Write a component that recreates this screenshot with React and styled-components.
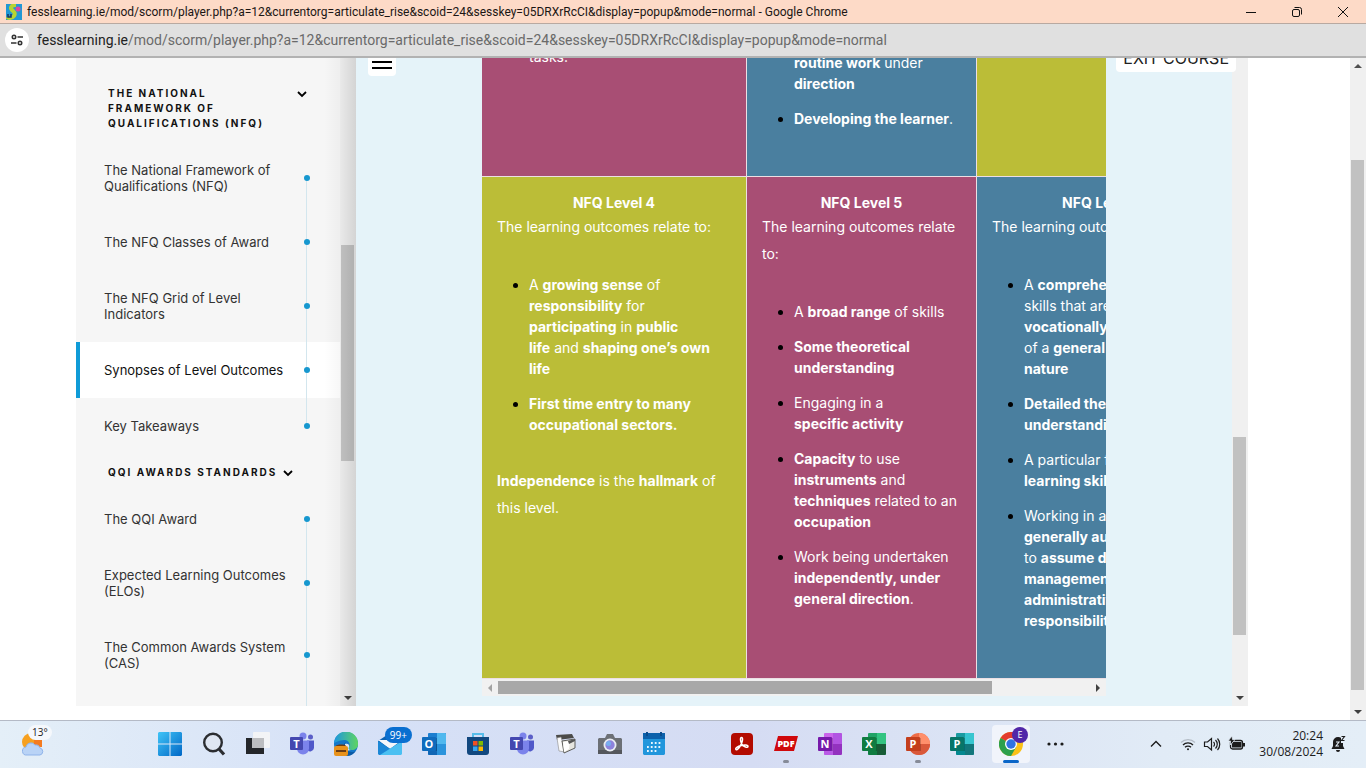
import React from "react";
import styled, { createGlobalStyle } from "styled-components";

const chapters = [
  {
    title: "The National Framework of Qualifications (NFQ)",
    lessons: [
      { name: "The National Framework of Qualifications (NFQ)" },
      { name: "The NFQ Classes of Award" },
      { name: "The NFQ Grid of Level Indicators" },
      { name: "Synopses of Level Outcomes", active: true },
      { name: "Key Takeaways" },
    ],
  },
  {
    title: "QQI Awards Standards",
    more: true,
    lessons: [
      { name: "The QQI Award" },
      { name: "Expected Learning Outcomes (ELOs)" },
      { name: "The Common Awards System (CAS)" },
    ],
  },
];

const Scroll = ({ before, size, after, horizontal, noStart, thumb, track }) => (
  <ScrollTrack $horizontal={horizontal} $track={track} aria-hidden="true">
    <ScrollArrow>
      {!noStart && (
        <svg width="10" height="10" viewBox="0 0 10 10">
          {horizontal ? (
            <path d="M7 1v8L3 5z" fill="#a3a3a3" />
          ) : (
            <path d="M1 7h8L5 3z" fill="#505050" />
          )}
        </svg>
      )}
    </ScrollArrow>
    <ScrollSpace $grow={before} />
    <ScrollThumb $grow={size} $color={thumb} $horizontal={horizontal} />
    <ScrollSpace $grow={after} />
    <ScrollArrow>
      <svg width="10" height="10" viewBox="0 0 10 10">
        <path d={horizontal ? "M3 1v8l4-4z" : "M1 3h8L5 7z"} fill="#404040" />
      </svg>
    </ScrollArrow>
  </ScrollTrack>
);

const Chapter = ({ title, lessons, more }) => (
  <section>
    <ChapterButton type="button">
      <span>{title}</span>
      <svg width="10" height="8" viewBox="0 0 10 8">
        <path d="M1 2l4 4 4-4" fill="none" stroke="#000" strokeWidth="1.8" />
      </svg>
    </ChapterButton>
    <LessonList>
      {lessons.map((lesson) => (
        <Lesson key={lesson.name}>
          <LessonLink href="#lesson" $active={lesson.active}>
            <span>{lesson.name}</span>
            <Dot />
          </LessonLink>
        </Lesson>
      ))}
      {more && <Lesson />}
    </LessonList>
  </section>
);

const TeamsIcon = () => (
  <svg width="24" height="24" viewBox="0 0 24 24">
    <circle cx="20.5" cy="5" r="2.5" fill="#5b5fc7" />
    <path d="M17 8.500h7v7.500a4 4 0 0 1-7 2z" fill="#5059c9" />
    <circle cx="13" cy="4" r="3.500" fill="#7b83eb" />
    <path d="M7 8.500h12v8a6 6 0 0 1-12 0z" fill="#7b83eb" />
    <rect y="5" width="13" height="13" rx="1" fill="#4448b0" />
    <IconLetter x="6.500" y="16">T</IconLetter>
  </svg>
);

const OfficeIcon = ({ letter, dark, shades, round }) => (
  <svg width="24" height="24" viewBox="0 0 24 24">
    {round ? (
      <g>
        <circle cx="13" cy="12" r="11" fill={shades[0]} />
        <path d="M13 1a11 11 0 0 1 11 11H13z" fill={shades[1]} />
        <path d="M2 12h22a11 11 0 0 1-22 0z" fill={shades[2]} />
      </g>
    ) : (
      <g>
        <rect x="6" y="1" width="18" height="22" rx="1" fill={shades[0]} />
        <path d="M15 1h8l1 1v10h-9z" fill={shades[1]} />
        <path d="M6 12h9v11H7l-1-1z" fill={shades[2]} />
        <path d="M15 12h9v10l-1 1h-8z" fill={shades[3]} />
      </g>
    )}
    <path d="M6 6h9v13H6z" fill="#000" opacity=".2" />
    <rect y="5" width="14" height="14" rx="1" fill={dark} />
    <IconLetter x="7" y="16">
      {letter}
    </IconLetter>
  </svg>
);

const WeatherIcon = () => (
  <svg width="24" height="24" viewBox="0 0 24 24">
    <circle cx="10" cy="10" r="9" fill="#f6a01f" />
    <path d="M13 8h8v7h-8z" fill="#f47b20" />
    <path
      d="M6 23a4 4 0 0 1-1-8 5 5 0 0 1 9-2 4.500 4.500 0 0 1 5 3 3.600 3.600 0 0 1 0 7z"
      fill="#b9d3f6"
      stroke="#8fb3ea"
      strokeWidth="1"
    />
  </svg>
);

const StartIcon = () => (
  <svg width="24" height="24" viewBox="0 0 24 24">
    <defs>
      <linearGradient id="start" x1="0" y1="0" x2="1" y2="1">
        <stop offset="0" stopColor="#40c4f7" />
        <stop offset="1" stopColor="#0067c6" />
      </linearGradient>
    </defs>
    <path
      d="M1 0h10.500v11.500H0V1zM12.500 0H23l1 1v10.500H12.500zM0 12.500h11.500V24H1l-1-1zM12.500 12.500H24V23l-1 1H12.500z"
      fill="url(#start)"
    />
  </svg>
);

const SearchIcon = () => (
  <svg width="24" height="24" viewBox="0 0 24 24" fill="none">
    <circle cx="11" cy="10.500" r="8.800" fill="#dfe6f2" stroke="#2b2d31" strokeWidth="2.400" />
    <path d="M17 17l5 5.500" stroke="#2b2d31" strokeWidth="3.200" />
  </svg>
);

const TaskViewIcon = () => (
  <svg width="24" height="24" viewBox="0 0 24 24">
    <rect x="7" y="0" width="17" height="16" rx="1" fill="#f3f4f6" />
    <path d="M0 6h18v16H0z" fill="#24262a" />
    <path d="M6 6h12v10H6z" fill="#bcbdc0" />
  </svg>
);

const EdgeIcon = () => (
  <svg width="24" height="24" viewBox="0 0 24 24">
    <defs>
      <linearGradient id="edge" x1="0" y1="0" x2="1" y2="0">
        <stop offset="0" stopColor="#1d96df" />
        <stop offset="1" stopColor="#5fd561" />
      </linearGradient>
    </defs>
    <circle cx="12" cy="12" r="12" fill="#1477c9" />
    <path
      d="M0 11A12 12 0 0 1 24 12c0 4-3 6-6 6s-4-1-3-3c2-4-1-7-5-7-5 0-9 3-10 3z"
      fill="url(#edge)"
    />
    <path d="M12 10c-3 4 0 10 6 10 2 0 3-.500 4-1.500A12 12 0 0 1 11 24C6 20 8 13 12 10z" fill="#0c5aa5" />
    <path d="M11 12c2-1 5 0 4 3-1 2 0 3 2 3l-6 1z" fill="#dbe6f8" />
    <rect x="0" y="14" width="14" height="10" rx="2" fill="#e8921c" />
    <path d="M2 14c0-2 10-2 10 0zM2 18h10v2H2z" fill="#6b3c13" />
  </svg>
);

const MailIcon = () => (
  <svg width="24" height="24" viewBox="0 0 24 24">
    <path d="M0 9l12-8 12 8v13H0z" fill="#0d63b3" />
    <path d="M0 8h24L12 17z" fill="#f4f7fb" />
    <path d="M0 9l14 9-9 5H1l-1-1z" fill="#1b87d6" />
    <path d="M24 9v13l-1 1H2z" fill="#4bc0f2" />
  </svg>
);

const StoreIcon = () => (
  <svg width="24" height="24" viewBox="0 0 24 24">
    <path d="M7 6V2h10v4" fill="none" stroke="#57bdea" strokeWidth="2" />
    <path d="M1 5h22v15a3 3 0 0 1-3 3H4a3 3 0 0 1-3-3z" fill="#12487f" />
    <path d="M7 9h4.500v4.500H7z" fill="#f25022" />
    <path d="M12.500 9H17v4.500h-4.500z" fill="#7fba00" />
    <path d="M7 14.500h4.500V19H7z" fill="#36a5f0" />
    <path d="M12.500 14.500H17V19h-4.500z" fill="#ffb900" />
  </svg>
);

const ScannerIcon = () => (
  <svg width="24" height="24" viewBox="0 0 24 24">
    <path d="M2 3l16-1 2 4-17 2z" fill="#4b4b49" />
    <path d="M3 6l4-1 4 15-6-1z" fill="#fafafa" stroke="#888" strokeWidth=".600" />
    <path d="M8 9l13-2v9l-11 5z" fill="#e6e5df" stroke="#5d5d5a" strokeWidth="1" />
    <path d="M9 10l7-1-1 8-5 3z" fill="#fff" />
    <path d="M14 9l7-2v2l-6 3z" fill="#555" />
  </svg>
);

const CameraIcon = () => (
  <svg width="24" height="24" viewBox="0 0 24 24">
    <path d="M7 6l2-4h6l2 4h6l1 1v15H0V7l1-1z" fill="#6c7076" />
    <path d="M0 18h24v4H0z" fill="#54575c" />
    <circle cx="12" cy="13" r="6.500" fill="#e9edf2" />
    <circle cx="12" cy="13" r="4.700" fill="#8d83dd" />
    <circle cx="10.500" cy="11.500" r="2.500" fill="#77aef0" />
  </svg>
);

const CalendarIcon = () => (
  <svg width="24" height="24" viewBox="0 0 24 24">
    <path d="M1 1h22v21l-1 1H2l-1-1z" fill="#2196dc" />
    <path d="M1 1h22v6H1z" fill="#0c61ab" />
    <path d="M5 0v4M19 0v4" stroke="#0a4c8d" strokeWidth="2" />
    <path
      d="M9 11h11M5 15h15M5 19h11"
      stroke="#e8f6ff"
      strokeWidth="1.800"
      strokeDasharray="1.800 2"
    />
  </svg>
);

const AcrobatIcon = () => (
  <svg width="24" height="24" viewBox="0 0 24 24">
    <rect x="1" y="1" width="22" height="22" rx="4" fill="#b30b00" />
    <path
      d="M11.500 5.500c2 0 .800 5-1 8-1.500 2.600-3.500 4.500-4.500 4-1.400-1.200 2-3.300 5-4 3-.700 7-.700 7 1s-4.500.300-6.200-2.400C10.500 10 9.800 5.500 11.500 5.500z"
      fill="none"
      stroke="#fff"
      strokeWidth="1.500"
    />
  </svg>
);

const PdfIcon = () => (
  <svg width="26" height="24" viewBox="0 0 26 24">
    <path d="M5 4h20l-4 15H1z" fill="#d0080c" />
    <PdfLetters x="13" y="15">
      PDF
    </PdfLetters>
  </svg>
);

const ChromeIcon = () => (
  <svg width="24" height="24" viewBox="0 0 24 24">
    <circle cx="12" cy="12" r="12" fill="#fbc116" />
    <path d="M12 12L1.600 6A12 12 0 0 1 22.400 6z" fill="#e33b2e" />
    <path d="M1.600 6A12 12 0 0 0 12 24l5.200-9L12 12z" fill="#2da04c" />
    <circle cx="12" cy="12" r="6" fill="#fff" />
    <circle cx="12" cy="12" r="4.700" fill="#2f73e0" />
  </svg>
);

const MoreIcon = () => (
  <svg width="24" height="24" viewBox="0 0 24 24" fill="#1c1c1c">
    <circle cx="5" cy="12" r="1.600" />
    <circle cx="11.500" cy="12" r="1.600" />
    <circle cx="18" cy="12" r="1.600" />
  </svg>
);

const apps = [
  { name: "Start", icon: <StartIcon /> },
  { name: "Search", icon: <SearchIcon /> },
  { name: "Task view", icon: <TaskViewIcon /> },
  { name: "Teams chat", icon: <TeamsIcon /> },
  { name: "Edge", icon: <EdgeIcon /> },
  { name: "Mail", icon: <MailIcon />, count: "99+" },
  {
    name: "Outlook",
    icon: <OfficeIcon letter="O" dark="#0f6cbd" shades={["#1b7fd0", "#50b8ee", "#1167b5", "#2b94dc"]} />,
  },
  { name: "Store", icon: <StoreIcon /> },
  { name: "Teams", icon: <TeamsIcon /> },
  { name: "Scanner", icon: <ScannerIcon /> },
  { name: "Camera", icon: <CameraIcon /> },
  { name: "Calendar", icon: <CalendarIcon /> },
  { name: "Empty" },
  { name: "Acrobat", icon: <AcrobatIcon /> },
  { name: "PDF reader", icon: <PdfIcon />, open: true },
  {
    name: "OneNote",
    icon: <OfficeIcon letter="N" dark="#7719aa" shades={["#ca64ea", "#b254e2", "#ba5be6", "#9332bf"]} />,
  },
  {
    name: "Excel",
    icon: <OfficeIcon letter="X" dark="#107c41" shades={["#21a366", "#33c481", "#107c41", "#185c37"]} />,
  },
  {
    name: "PowerPoint",
    icon: <OfficeIcon letter="P" dark="#c43e1c" shades={["#ed6c47", "#ff8f6b", "#d9583a"]} round />,
    open: true,
  },
  {
    name: "Publisher",
    icon: <OfficeIcon letter="P" dark="#077568" shades={["#1a9ba1", "#37c6d0", "#048890", "#12777c"]} />,
  },
];

const Tray = () => (
  <TrayArea>
    <TrayButton type="button" aria-label="Show hidden icons">
      <svg width="12" height="12" viewBox="0 0 12 12" fill="none" stroke="#1c1c1c" strokeWidth="1.400">
        <path d="M1 8.500l5-5 5 5" />
      </svg>
    </TrayButton>
    <TrayIcons>
      <svg width="16" height="16" viewBox="0 0 16 16" fill="none" stroke="#1c1c1c" strokeWidth="1.300">
        <path d="M1 6.500a10 10 0 0 1 14 0" stroke="#b4bcc6" />
        <path d="M3 9a7 7 0 0 1 10 0M5 11.300a4.200 4.200 0 0 1 6 0" />
        <circle cx="8" cy="13.300" r="1" fill="#1c1c1c" stroke="none" />
      </svg>
      <svg width="18" height="16" viewBox="0 0 18 16" fill="none" stroke="#1c1c1c" strokeWidth="1.200">
        <path d="M1.500 6v4.500h3L8.500 14V2.500L4.500 6zM10.500 6a3 3 0 0 1 0 4.500M12.500 4a6 6 0 0 1 0 8.500M14.500 2.500a8.500 8.500 0 0 1 0 11.500" />
      </svg>
      <svg width="18" height="16" viewBox="0 0 18 16">
        <rect x="2.500" y="4.500" width="12" height="8.500" rx="2" fill="none" stroke="#1c1c1c" strokeWidth="1.300" />
        <path d="M4 6h9.500v5.500H4zM15 7h2v3.500h-2z" fill="#1c1c1c" />
        <path d="M4 0L0 5h2.500v4L7 3.500H4.500z" fill="#1c1c1c" stroke="#e3edf7" strokeWidth=".800" />
      </svg>
    </TrayIcons>
    <Clock>
      <span>20:24</span>
      <span>30/08/2024</span>
    </Clock>
    <svg width="16" height="18" viewBox="0 0 16 18">
      <path d="M7 2a5 5 0 0 0-5 5v4l-1.500 3h13L12 11V8h-2V2.800A5 5 0 0 0 7 2zM5 15h4a2 2 0 0 1-4 0z" fill="#1c1c1c" />
      <path d="M5 7h3l-3 4h3" fill="none" stroke="#e3edf7" strokeWidth="1.100" />
      <path d="M10.500 1.500h3l-3 4h3" fill="none" stroke="#1c1c1c" strokeWidth="1.100" />
    </svg>
  </TrayArea>
);

const LevelTable = () => (
  <Table>
    <colgroup>
      <Column $width={265} />
      <Column $width={230} />
      <Column $width={253} />
    </colgroup>
    <tbody>
      <tr>
        <Cell $color="#a84e74">
          <Outcomes>
            <li>
              Carrying out
              <br />
              directed
              <br />
              tasks.
            </li>
          </Outcomes>
        </Cell>
        <Cell $color="#4a7f9f">
          <Intro>To:</Intro>
          <Outcomes>
            <li>
              Carrying out
              <br />
              <b>routine work</b> under <b>direction</b>
            </li>
            <li>
              <b>Developing the learner</b>.
            </li>
          </Outcomes>
        </Cell>
        <Cell $color="#bbbd37" />
      </tr>
      <tr>
        <Cell $color="#bbbd37">
          <Level>NFQ Level 4</Level>
          <Intro>The learning outcomes relate to:</Intro>
          <Outcomes>
            <li>
              A <b>growing sense</b> of <b>responsibility</b> for <b>participating</b> in <b>public</b>
              <br />
              <b>life</b> and <b>shaping one’s own life</b>
            </li>
            <li>
              <b>First time entry to many occupational sectors.</b>
            </li>
          </Outcomes>
          <Intro>
            <b>Independence</b> is the <b>hallmark</b> of this level.
          </Intro>
        </Cell>
        <Cell $color="#a84e74">
          <Level>NFQ Level 5</Level>
          <Intro>The learning outcomes relate to:</Intro>
          <Outcomes>
            <li>
              A <b>broad range</b> of skills
            </li>
            <li>
              <b>Some theoretical understanding</b>
            </li>
            <li>
              Engaging in a<br />
              <b>specific activity</b>
            </li>
            <li>
              <b>Capacity</b> to use <b>instruments</b> and <b>techniques</b> related to an <b>occupation</b>
            </li>
            <li>
              Work being undertaken <b>independently, under general direction</b>.
            </li>
          </Outcomes>
        </Cell>
        <Cell $color="#4a7f9f">
          <Level>NFQ Level 6</Level>
          <Intro>The learning outcomes relate to:</Intro>
          <Outcomes>
            <li>
              A <b>comprehensive range</b> of
              <br />
              skills that are
              <br />
              <b>vocationally specific</b> or
              <br />
              of a <b>general supervisory</b>
              <br />
              <b>nature</b>
            </li>
            <li>
              <b>Detailed theoretical understanding</b>
            </li>
            <li>
              A particular focus on
              <br />
              <b>learning skills</b>
            </li>
            <li>
              Working in a<br />
              <b>generally autonomous</b> way
              <br />
              to <b>assume design</b>
              <br />
              <b>management</b> and
              <br />
              <b>administrative</b>
              <br />
              <b>responsibilities</b>
            </li>
          </Outcomes>
        </Cell>
      </tr>
    </tbody>
  </Table>
);

const App = () => {
  const path = "/mod/scorm/player.php?a=12&currentorg=articulate_rise&scoid=24&sesskey=05DRXrRcCI&display=popup&mode=normal";
  return (
    <Screen>
      <GlobalStyle />
      <TitleBar>
        <svg width="16" height="16" viewBox="0 0 16 16">
          <rect width="16" height="16" fill="#2398d4" />
          <path d="M10 1C5 1 4 4 6 6s4 3 2 6-6 2-7 1" fill="none" stroke="#b9d432" strokeWidth="4" />
          <circle cx="12" cy="5" r="2.500" fill="#e04a9b" />
          <path d="M2 10v3h3v-3" fill="none" stroke="#14306b" strokeWidth="1.500" />
        </svg>
        <TitleText>fesslearning.ie{path} - Google Chrome</TitleText>
        <WindowButtons>
          <WindowButton type="button" aria-label="Minimise">
            <svg width="12" height="12" viewBox="0 0 12 12">
              <path d="M1 6.500h10" stroke="#111" />
            </svg>
          </WindowButton>
          <WindowButton type="button" aria-label="Restore">
            <svg width="12" height="12" viewBox="0 0 12 12" fill="none" stroke="#111">
              <rect x="1.500" y="3.500" width="7" height="7" rx="1.500" />
              <path d="M3.500 1.500h5a2 2 0 0 1 2 2v5" />
            </svg>
          </WindowButton>
          <WindowButton type="button" aria-label="Close">
            <svg width="12" height="12" viewBox="0 0 12 12" fill="none" stroke="#111">
              <path d="M1 1l10 10M11 1L1 11" />
            </svg>
          </WindowButton>
        </WindowButtons>
      </TitleBar>
      <AddressBar>
        <SiteButton type="button" aria-label="Site information">
          <svg width="14" height="14" viewBox="0 0 14 14" fill="none" stroke="#333" strokeWidth="1.600">
            <circle cx="4" cy="4" r="1.700" />
            <path d="M7.500 4H13M1 10h5.500" />
            <circle cx="10" cy="10" r="1.700" />
          </svg>
        </SiteButton>
        <Address>
          <Host>fesslearning.ie</Host>
          {path}
        </Address>
      </AddressBar>

      <Page>
        <Player>
          <Sidebar>
            <Contents aria-label="Course contents">
              {chapters.map((chapter) => (
                <Chapter key={chapter.title} {...chapter} />
              ))}
            </Contents>
            <Scroll noStart before={171} size={216} after={229} thumb="#c6c6c6" track="#f1f1f1" />
            <SidebarShade />
          </Sidebar>
          <Course>
            <TableScroll>
              <LevelTable />
            </TableScroll>
            <Scroll horizontal before={0} size={494} after={98} thumb="#a8a8a8" track="#f1f1f1" />
          </Course>
          <Scroll noStart before={363} size={198} after={55} thumb="#c1c1c1" track="#f0f0f0" />
          <MenuButton type="button" aria-label="Toggle menu">
            <svg width="20" height="16" viewBox="0 0 20 16">
              <path d="M0 2h20M0 8h20M0 14h20" stroke="#000" strokeWidth="2" />
            </svg>
          </MenuButton>
          <ExitButton type="button">EXIT COURSE</ExitButton>
        </Player>
        <Scroll before={86} size={530} after={14} thumb="#c1c1c1" track="#f0f0f0" />
      </Page>

      <Taskbar>
        <Weather>
          <WeatherIcon />
          <Temperature>13°</Temperature>
        </Weather>
        {apps.map((app) =>
          app.icon ? (
            <AppButton key={app.name} type="button" aria-label={app.name} $open={app.open}>
              {app.icon}
              {app.count && <Count>{app.count}</Count>}
            </AppButton>
          ) : (
            <AppGap key={app.name} />
          )
        )}
        <CurrentApp type="button" aria-label="Chrome">
          <ChromeIcon />
          <Profile>E</Profile>
        </CurrentApp>
        <AppButton type="button" aria-label="More apps">
          <MoreIcon />
        </AppButton>
        <Tray />
      </Taskbar>
    </Screen>
  );
};

export default App;

const GlobalStyle = createGlobalStyle`
  * {
    box-sizing: border-box;
  }
  body {
    margin: 0;
    background: #fff;
    font-family: Inter, "Liberation Sans", sans-serif;
  }
  button {
    padding: 0;
    border: 0;
    background: none;
    font-family: inherit;
    color: inherit;
  }
  svg {
    display: block;
    flex-shrink: 0;
  }
`;

const Screen = styled.div`
  display: flex;
  flex-direction: column;
  height: 100vh;
  overflow: hidden;
`;

const TitleBar = styled.header`
  display: flex;
  align-items: center;
  gap: 5px;
  height: 24px;
  padding-left: 6px;
  background: #fddac7;
  border-bottom: 1px solid #b8a9a1;
`;

const TitleText = styled.div`
  flex: 1;
  font-family: Roboto, "Noto Sans", sans-serif;
  font-size: 12px;
  line-height: 16px;
  color: #1b1614;
  white-space: nowrap;
`;

const WindowButtons = styled.div`
  display: flex;
`;

const WindowButton = styled.button`
  display: flex;
  align-items: center;
  justify-content: center;
  width: 46px;
  height: 23px;
`;

const AddressBar = styled.div`
  display: flex;
  align-items: center;
  gap: 8px;
  height: 34px;
  padding-left: 5px;
  background: #e0e0e0;
  border-bottom: 2px solid #b2b2b2;
`;

const SiteButton = styled.button`
  display: flex;
  align-items: center;
  justify-content: center;
  width: 24px;
  height: 24px;
  border-radius: 50%;
  background: #fff;
`;

const Address = styled.div`
  font-family: Roboto, "Noto Sans", sans-serif;
  font-size: 14px;
  line-height: 20px;
  color: #6a6a6a;
  white-space: nowrap;
`;

const Host = styled.span`
  color: #222;
`;

const Page = styled.div`
  display: flex;
  flex: 1;
  min-height: 0;
`;

const Player = styled.main`
  position: relative;
  display: flex;
  flex: 1;
  min-width: 0;
  margin: 0 102px 14px 76px;
  overflow: hidden;
  background: #e5f3f9;
`;

const ScrollTrack = styled.div`
  display: flex;
  flex-direction: ${(props) => (props.$horizontal ? "row" : "column")};
  flex-shrink: 0;
  width: ${(props) => (props.$horizontal ? "auto" : "16px")};
  height: ${(props) => (props.$horizontal ? "17px" : "auto")};
  background: ${(props) => props.$track};
`;

const ScrollArrow = styled.div`
  display: flex;
  flex: 0 0 16px;
  align-items: center;
  justify-content: center;
`;

const ScrollSpace = styled.div`
  flex: ${(props) => props.$grow} 0 0;
`;

const ScrollThumb = styled.div`
  flex: ${(props) => props.$grow} 0 0;
  margin: ${(props) => (props.$horizontal ? "2px 0" : "0 2px 0 1px")};
  background: ${(props) => props.$color};
`;

const Sidebar = styled.aside`
  position: relative;
  display: flex;
  width: 280px;
  flex-shrink: 0;
  background: #f6f6f6;
`;

const SidebarShade = styled.div`
  position: absolute;
  top: 0;
  right: 0;
  bottom: 0;
  width: 32px;
  background: linear-gradient(to right, rgba(0, 0, 0, 0), rgba(0, 0, 0, 0.03) 50%, rgba(0, 0, 0, 0.12));
  pointer-events: none;
`;

const Contents = styled.nav`
  flex: 1;
  min-width: 0;
  padding-top: 17px;
  overflow: hidden;
`;

const ChapterButton = styled.button`
  display: flex;
  align-items: flex-start;
  gap: 6px;
  width: 100%;
  padding: 11px 33px 11px 32px;
  font-size: 10px;
  font-weight: 700;
  line-height: 15px;
  letter-spacing: 2px;
  text-align: left;
  text-transform: uppercase;
  color: #111;
  svg {
    margin-top: 4px;
  }
`;

const LessonList = styled.ul`
  margin: 0;
  padding: 0;
  list-style: none;
`;

const Lesson = styled.li`
  position: relative;
  min-height: 56px;
  &::after {
    content: "";
    position: absolute;
    top: 0;
    right: 33px;
    bottom: 0;
    width: 1px;
    background: #d3e6ee;
  }
  &:first-child::after {
    top: 50%;
  }
  &:last-child::after {
    bottom: 50%;
  }
`;

const LessonLink = styled.a`
  display: flex;
  align-items: center;
  justify-content: space-between;
  padding: 20px 30px 20px 24px;
  border-left: 4px solid ${(props) => (props.$active ? "#0f9bd7" : "transparent")};
  background: ${(props) => (props.$active ? "#fff" : "transparent")};
  font-size: 13px;
  line-height: 16px;
  color: ${(props) => (props.$active ? "#111" : "#333")};
  text-decoration: none;
  span {
    max-width: 184px;
  }
`;

const Dot = styled.i`
  position: relative;
  z-index: 1;
  width: 6px;
  height: 6px;
  border-radius: 50%;
  background: #1697cf;
`;

const Course = styled.section`
  display: flex;
  flex: 1;
  flex-direction: column;
  justify-content: flex-end;
  min-width: 0;
  padding: 0 126px 10px;
`;

const TableScroll = styled.div`
  display: flex;
  flex: 1;
  align-items: flex-end;
  min-height: 0;
  overflow: hidden;
`;

const Table = styled.table`
  flex-shrink: 0;
  width: 748px;
  table-layout: fixed;
  border-spacing: 0;
  font-size: 14px;
  line-height: 21px;
  color: #fff;
`;

const Column = styled.col`
  width: ${(props) => props.$width}px;
`;

const Cell = styled.td`
  padding: 15px;
  border-right: 1px solid #ecdfe4;
  border-bottom: 1px solid #ecdfe4;
  background: ${(props) => props.$color};
  vertical-align: top;
`;

const Level = styled.div`
  font-weight: 700;
  text-align: center;
`;

const Intro = styled.p`
  margin: 0;
  line-height: 27px;
`;

const Outcomes = styled.ul`
  margin: 34px 0 32px;
  padding-left: 32px;
  li {
    margin-bottom: 14px;
  }
  li::marker {
    color: #000;
  }
`;

const MenuButton = styled.button`
  position: absolute;
  top: -10px;
  left: 292px;
  display: flex;
  align-items: center;
  justify-content: center;
  width: 28px;
  height: 28px;
  border-radius: 4px;
  background: #fff;
`;

const ExitButton = styled.button`
  position: absolute;
  top: -12px;
  right: 12px;
  padding: 1px 7px 3px;
  border-radius: 4px;
  background: #fff;
  font-size: 16px;
  line-height: 22px;
  color: #222;
`;

const Taskbar = styled.footer`
  display: flex;
  align-items: center;
  height: 48px;
  padding-bottom: 2px;
  border-top: 1px solid #b4bac6;
  background: linear-gradient(to right, #e4eff8, #d6e1f7 25%, #d5dcf3 55%, #e1ebf6 85%, #e4eef7);
  font-family: "Open Sans", "Noto Sans", sans-serif;
`;

const Weather = styled.div`
  position: relative;
  width: 148px;
  padding-left: 21px;
`;

const Temperature = styled.span`
  position: absolute;
  top: -7px;
  left: 28px;
  padding: 0 4px;
  border-radius: 8px;
  background: #f5f8fc;
  font-size: 10px;
  line-height: 15px;
  color: #222;
`;

const AppButton = styled.button`
  position: relative;
  display: flex;
  align-items: center;
  justify-content: center;
  width: 44px;
  height: 46px;
  &::after {
    content: "";
    display: ${(props) => (props.$open ? "block" : "none")};
    position: absolute;
    bottom: 4px;
    width: 6px;
    height: 3px;
    border-radius: 2px;
    background: #868b98;
  }
`;

const AppGap = styled.div`
  width: 44px;
`;

const Count = styled.span`
  position: absolute;
  top: 6px;
  right: 0;
  padding: 0 5px;
  border-radius: 8px;
  background: #0a6fd0;
  font-size: 10px;
  line-height: 16px;
  color: #fff;
`;

const CurrentApp = styled(AppButton)`
  width: 38px;
  height: 38px;
  margin: 0 4px 0 8px;
  border-radius: 4px;
  background: #f1f4fb;
  &::after {
    display: block;
    bottom: 0;
    width: 16px;
    background: #0a66c8;
  }
`;

const Profile = styled.span`
  position: absolute;
  top: 2px;
  right: 2px;
  width: 16px;
  height: 16px;
  border-radius: 50%;
  background: #5127a8;
  font-size: 9px;
  line-height: 16px;
  color: #fff;
`;

const IconLetter = styled.text`
  font-size: 11px;
  font-weight: 700;
  text-anchor: middle;
  fill: #fff;
`;

const PdfLetters = styled(IconLetter)`
  font-size: 9px;
  font-weight: 800;
`;

const TrayArea = styled.div`
  display: flex;
  align-items: center;
  gap: 8px;
  margin-left: auto;
  padding-right: 19px;
  color: #1c1c1c;
`;

const TrayButton = styled.button`
  padding-right: 10px;
`;

const TrayIcons = styled.div`
  display: flex;
  gap: 7px;
  padding-right: 5px;
`;

const Clock = styled.div`
  display: flex;
  flex-direction: column;
  align-items: flex-end;
  font-size: 12px;
  line-height: 16px;
`;
